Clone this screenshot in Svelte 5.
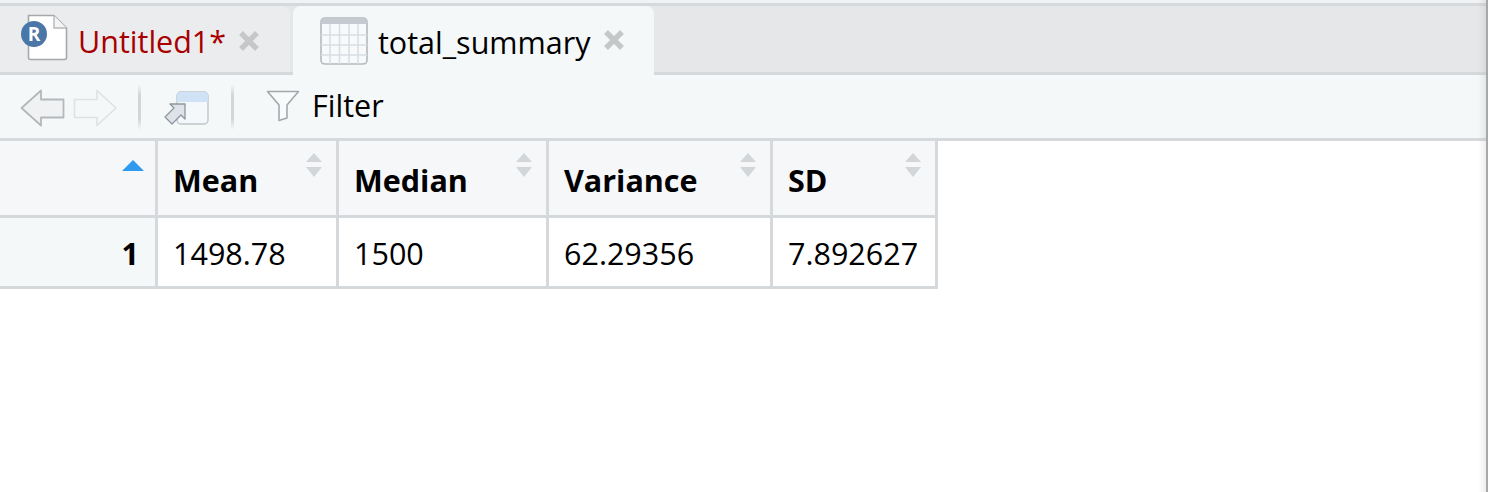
<script>
  const columns = [
    { name: 'Mean', value: '1498.78' },
    { name: 'Median', value: '1500' },
    { name: 'Variance', value: '62.29356' },
    { name: 'SD', value: '7.892627' }
  ];
</script>

<div class="page">
  <div class="topline"></div>
  <div class="tabbar">
    <div class="tab inactive">
      <svg class="file" width="50" height="50" viewBox="0 0 50 50">
        <path d="M8.5 1.5H34L46.5 14V43.5a2 2 0 0 1-2 2h-34a2 2 0 0 1-2-2z" fill="#fff" stroke="#a6a9ac" stroke-width="1.6"/>
        <path d="M34 1.5V14H46.5" fill="#f4f4f4" stroke="#b5b8bb" stroke-width="1.4"/>
        <circle cx="14" cy="20" r="13" fill="#4a76a8"/>
        <text x="14" y="27" text-anchor="middle" class="rletter">R</text>
      </svg>
      <span class="title red">Untitled1*</span>
      <svg class="close" width="22" height="22" viewBox="0 0 22 22"><path d="M3 3l16 16M19 3L3 19" stroke="#c5c7c9" stroke-width="5.4"/></svg>
    </div>
    <div class="tab active">
      <svg class="grid" width="48" height="48" viewBox="0 0 48 48">
        <rect x="1" y="1" width="46" height="46" rx="4" fill="#f7f9fb" stroke="#b3b8bd" stroke-width="1.6"/>
        <path d="M1 5a4 4 0 0 1 4-4h38a4 4 0 0 1 4 4v2H1z" fill="#c4cad0"/>
        <path d="M1 18H47M1 28H47M1 38H47M10 7V47M19.5 7V47M29 7V47M38 7V47" stroke="#d8dde3" stroke-width="1.5" fill="none"/>
      </svg>
      <span class="title">total_summary</span>
      <svg class="close" width="22" height="22" viewBox="0 0 22 22"><path d="M3 3l16 16M19 3L3 19" stroke="#c5c7c9" stroke-width="5.4"/></svg>
    </div>
  </div>

  <div class="toolbar">
    <svg class="arrows" width="98" height="38" viewBox="0 0 98 38">
      <path d="M1.5 19L21 1.5V10.5H43.5V28.5H21V36.5z" fill="#f0f1f2" stroke="#b4b8bb" stroke-width="1.8" stroke-linejoin="round"/>
      <path d="M96 19L77 1.5V10.5H54.5V28.5H77V36.5z" fill="#f5f8f9" stroke="#dfe2e4" stroke-width="1.6" stroke-linejoin="round"/>
    </svg>
    <div class="sep"></div>
    <svg class="popout" width="46" height="34" viewBox="0 0 46 34">
      <rect x="14" y="1" width="31" height="32" rx="4" fill="#f5f8fb" stroke="#bfc6cc" stroke-width="1.4"/>
      <path d="M14 11V5a4 4 0 0 1 4-4h23a4 4 0 0 1 4 4v6z" fill="#cfe2f6"/>
      <path d="M1 27l9-9-4-4h15v15l-4-4-9 9z" fill="#dde3e8" stroke="#8d969e" stroke-width="1.3" stroke-linejoin="round" transform="translate(1 -1)"/>
    </svg>
    <div class="sep second"></div>
    <svg class="funnel" width="34" height="32" viewBox="0 0 34 32">
      <path d="M1.5 1.5H32.5L21 15V28L13 30.5V15z" fill="#f8fafb" stroke="#a3a8ac" stroke-width="1.6" stroke-linejoin="round"/>
    </svg>
    <span class="filter">Filter</span>
  </div>

  <div class="table">
    <div class="head rowhead">
      <svg class="sorted" width="22" height="11" viewBox="0 0 22 11"><path d="M11 0L22 11H0z" fill="#2f9bf0"/></svg>
    </div>
    {#each columns as c}
      <div class="head">
        <span>{c.name}</span>
        <svg class="sort" width="16" height="24" viewBox="0 0 16 24"><path d="M8 0L16 9H0zM0 14H16L8 24z" fill="#d3d6d9"/></svg>
      </div>
    {/each}
    <div class="cell rownum">1</div>
    {#each columns as c}
      <div class="cell">{c.value}</div>
    {/each}
  </div>

  <div class="edge"></div>
</div>

<style>
  :global(body) { margin: 0; background: #fff; }
  .page {
    position: relative;
    width: 1488px;
    height: 492px;
    overflow: hidden;
    font-family: "Open Sans", "Noto Sans", sans-serif;
    color: #000;
  }
  .topline { height: 3px; background: #f1f2f3; border-bottom: 3px solid #d6d9dc; }
  .tabbar {
    display: flex;
    align-items: flex-start;
    height: 66px;
    background: #e6e7e9;
    border-bottom: 3px solid #d6d9dc;
  }
  .tab {
    position: relative;
    display: flex;
    align-items: center;
    box-sizing: border-box;
    border-radius: 0 8px 0 0;
  }
  .inactive { width: 290px; height: 66px; background: #ebecee; }
  .active {
    width: 361px;
    height: 69px;
    margin-left: 3px;
    background: #f4f8f9;
    border-radius: 8px 8px 0 0;
    z-index: 1;
  }
  .file { margin-left: 20px; margin-top: -1px; flex: none; }
  .rletter { font: bold 19px "Open Sans", sans-serif; fill: #fff; }
  .title { font-size: 30.5px; line-height: 40px; white-space: nowrap; }
  .red { color: #a80000; margin-left: 8px; margin-top: 4px; }
  .inactive .close { margin-left: 12px; margin-top: 3px; flex: none; }
  .grid { margin-left: 27px; margin-top: 1px; flex: none; }
  .active .title { margin-left: 10px; margin-top: 2px; }
  .active .close { margin-left: 12px; margin-top: -1px; flex: none; }
  .toolbar {
    display: flex;
    align-items: center;
    height: 63px;
    background: #f4f8f9;
    border-bottom: 3px solid #d6d9dc;
  }
  .arrows { margin-left: 20px; margin-top: 3px; }
  .sep { width: 3px; height: 46px; margin-left: 20px; background: linear-gradient(#f4f8f9, #d3d6d9 25%, #d3d6d9 75%, #f4f8f9); }
  .popout { margin-left: 22px; margin-top: 3px; }
  .sep.second { margin-left: 22px; }
  .funnel { margin-left: 32px; margin-top: -2px; }
  .filter { font-size: 30.5px; margin-left: 12px; line-height: 40px; margin-top: -3px; }
  .table {
    display: grid;
    grid-template-columns: 158px 181px 210px 224px 165px;
    grid-template-rows: 77px 71px;
    width: 938px;
  }
  .head, .cell {
    position: relative;
    box-sizing: border-box;
    border-right: 3px solid #d6d9dc;
    border-bottom: 3px solid #d6d9dc;
    padding-left: 15px;
    display: flex;
    align-items: center;
    font-size: 30.5px;
    white-space: nowrap;
  }
  .head { background: #f5f7f9; font-weight: 700; padding-top: 4px; }
  .cell { background: #fff; padding-top: 1px; }
  .rownum {
    background: #f4f8f9;
    font-weight: 700;
    justify-content: flex-end;
    padding-right: 16px;
  }
  .sorted { position: absolute; left: 122px; top: 19px; }
  .sort { position: absolute; right: 14px; top: 12px; }
  .edge {
    position: absolute;
    top: 0;
    right: 0;
    bottom: 0;
    width: 10px;
    background: linear-gradient(90deg, rgba(150,150,150,0), rgba(150,150,150,.16) 78%, #a8a8a8 80%, #a8a8a8);
  }
</style>
